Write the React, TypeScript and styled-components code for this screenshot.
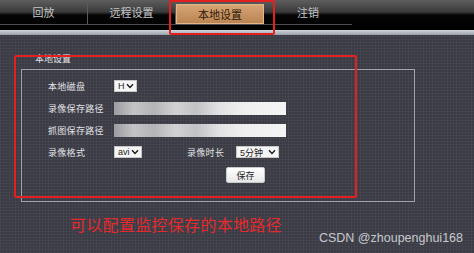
import React from 'react'
import styled, { createGlobalStyle } from 'styled-components'

const GlobalStyle = createGlobalStyle`
  html, body {
    margin: 0;
    padding: 0;
    background: #3a3b44;
  }
  body {
    font-family: "Noto Sans CJK SC", "Noto Sans", sans-serif;
  }
`

const Page = styled.div`
  position: relative;
  width: 474px;
  height: 253px;
  overflow: hidden;
  display: flex;
  flex-direction: column;
  background-color: #3a3b44;
  background-image: repeating-linear-gradient(0deg, rgba(255, 255, 255, 0.035) 0 1px, transparent 1px 3px),
    repeating-linear-gradient(90deg, rgba(255, 255, 255, 0.035) 0 1px, transparent 1px 3px);
`

const TopBar = styled.div`
  height: 30px;
  background: linear-gradient(#5e5e5e 0, #3a3a3a 12px, #050505 15px, #000 100%);
`

const Tabs = styled.div`
  display: flex;
  width: 352px;
  height: 24px;
  border-bottom: 1px solid #4c4c4c;
`

const Tab = styled.div<{ $active?: boolean; $sep?: boolean }>`
  flex: 0 0 88px;
  display: flex;
  align-items: center;
  justify-content: center;
  margin-top: ${(p) => (p.$active ? '4px' : '0')};
  font-size: 11px;
  color: ${(p) => (p.$active ? '#2b1a0c' : '#c4c6c8')};
  border-right: ${(p) => (p.$sep ? '1px solid #5a5a5a' : '0')};
  background: ${(p) => (p.$active ? 'linear-gradient(#d9a675, #b98251)' : 'transparent')};
  box-shadow: ${(p) => (p.$active ? 'inset 0 0 0 1px #e2b78c' : 'none')};
  box-sizing: border-box;
`

const Strip = styled.div`
  height: 5px;
  background: linear-gradient(#d2d5dc, #9a9ea8);
`

const Content = styled.div`
  flex: 1;
  display: flex;
  flex-direction: column;
  padding: 18px 0 0 21px;
`

const GroupTitle = styled.div`
  height: 16px;
  padding-left: 14px;
  font-size: 9px;
  line-height: 12px;
  color: #e4e4e8;
`

const GroupBox = styled.div`
  width: 394px;
  height: 133px;
  box-sizing: border-box;
  border: 1px solid #a2a3ac;
  padding: 5px 0 0 26px;
  display: flex;
  flex-direction: column;
`

const Row = styled.div`
  display: flex;
  align-items: center;
  height: 22px;
`

const Label = styled.div<{ $w?: number; $ml?: number }>`
  width: ${(p) => p.$w ?? 66}px;
  margin-left: ${(p) => p.$ml ?? 0}px;
  font-size: 9px;
  letter-spacing: 0.3px;
  color: #e2e2e6;
  white-space: nowrap;
`

const Select = styled.div<{ $w: number }>`
  width: ${(p) => p.$w}px;
  height: 12px;
  box-sizing: border-box;
  display: flex;
  align-items: center;
  justify-content: space-between;
  padding: 0 2px 0 3px;
  background: #f6f6f6;
  border: 1px solid #c8c8c8;
  font-family: "Liberation Sans", "Noto Sans CJK SC", sans-serif;
  font-size: 9px;
  color: #222;
`

const PathInput = styled.div`
  width: 172px;
  height: 13px;
  background: linear-gradient(90deg, #9c9ca0 0, #c4c4c6 20px, #b4b4b8 40px, #d2d2d4 62px, #c2c2c6 82px, #e2e2e4 105px, #efeff0 130px, #f4f4f4 100%);
`

const ButtonRow = styled.div`
  display: flex;
  padding: 4px 0 0 178px;
`

const SaveButton = styled.button`
  width: 39px;
  height: 16px;
  padding: 0;
  border: 1px solid #c9c9c9;
  border-radius: 2px;
  background: linear-gradient(#ffffff, #e8e8e8);
  font-family: "Noto Sans CJK SC", sans-serif;
  font-size: 9px;
  color: #1e1e1e;
`

const Caption = styled.div`
  margin: 12px 0 0 49px;
  font-size: 16px;
  line-height: 20px;
  color: #e42a2c;
  letter-spacing: 0.3px;
`

const Watermark = styled.div`
  position: absolute;
  right: 11px;
  bottom: 8px;
  font-family: "Liberation Sans", Arial, sans-serif;
  font-size: 12.5px;
  color: rgba(225, 226, 230, 0.85);
`

const Highlight = styled.div<{ $x: number; $y: number; $w: number; $h: number }>`
  position: absolute;
  left: ${(p) => p.$x}px;
  top: ${(p) => p.$y}px;
  width: ${(p) => p.$w}px;
  height: ${(p) => p.$h}px;
  box-sizing: border-box;
  border: 2px solid #e3201f;
  border-radius: 2px;
  pointer-events: none;
`

const Chevron = () => (
  <svg width="8" height="6" viewBox="0 0 8 6">
    <path d="M1 1.2 L4 4.4 L7 1.2" fill="none" stroke="#1a1a1a" strokeWidth="1.4" />
  </svg>
)

export default function App() {
  return (
    <Page>
      <GlobalStyle />
      <TopBar>
        <Tabs>
          <Tab $sep>回放</Tab>
          <Tab $sep>远程设置</Tab>
          <Tab $active>本地设置</Tab>
          <Tab>注销</Tab>
        </Tabs>
      </TopBar>
      <Strip />
      <Content>
        <GroupTitle>本地设置</GroupTitle>
        <GroupBox>
          <Row>
            <Label>本地磁盘</Label>
            <Select $w={23}>
              H <Chevron />
            </Select>
          </Row>
          <Row>
            <Label>录像保存路径</Label>
            <PathInput />
          </Row>
          <Row>
            <Label>抓图保存路径</Label>
            <PathInput />
          </Row>
          <Row>
            <Label>录像格式</Label>
            <Select $w={28}>
              avi <Chevron />
            </Select>
            <Label $w={49} $ml={45}>
              录像时长
            </Label>
            <Select $w={43}>
              5分钟 <Chevron />
            </Select>
          </Row>
          <ButtonRow>
            <SaveButton>保存</SaveButton>
          </ButtonRow>
        </GroupBox>
        <Caption>可以配置监控保存的本地路径</Caption>
      </Content>
      <Watermark>CSDN @zhoupenghui168</Watermark>
      <Highlight $x={169} $y={0} $w={106} $h={35} />
      <Highlight $x={14} $y={55} $w={343} $h={143} />
    </Page>
  )
}
